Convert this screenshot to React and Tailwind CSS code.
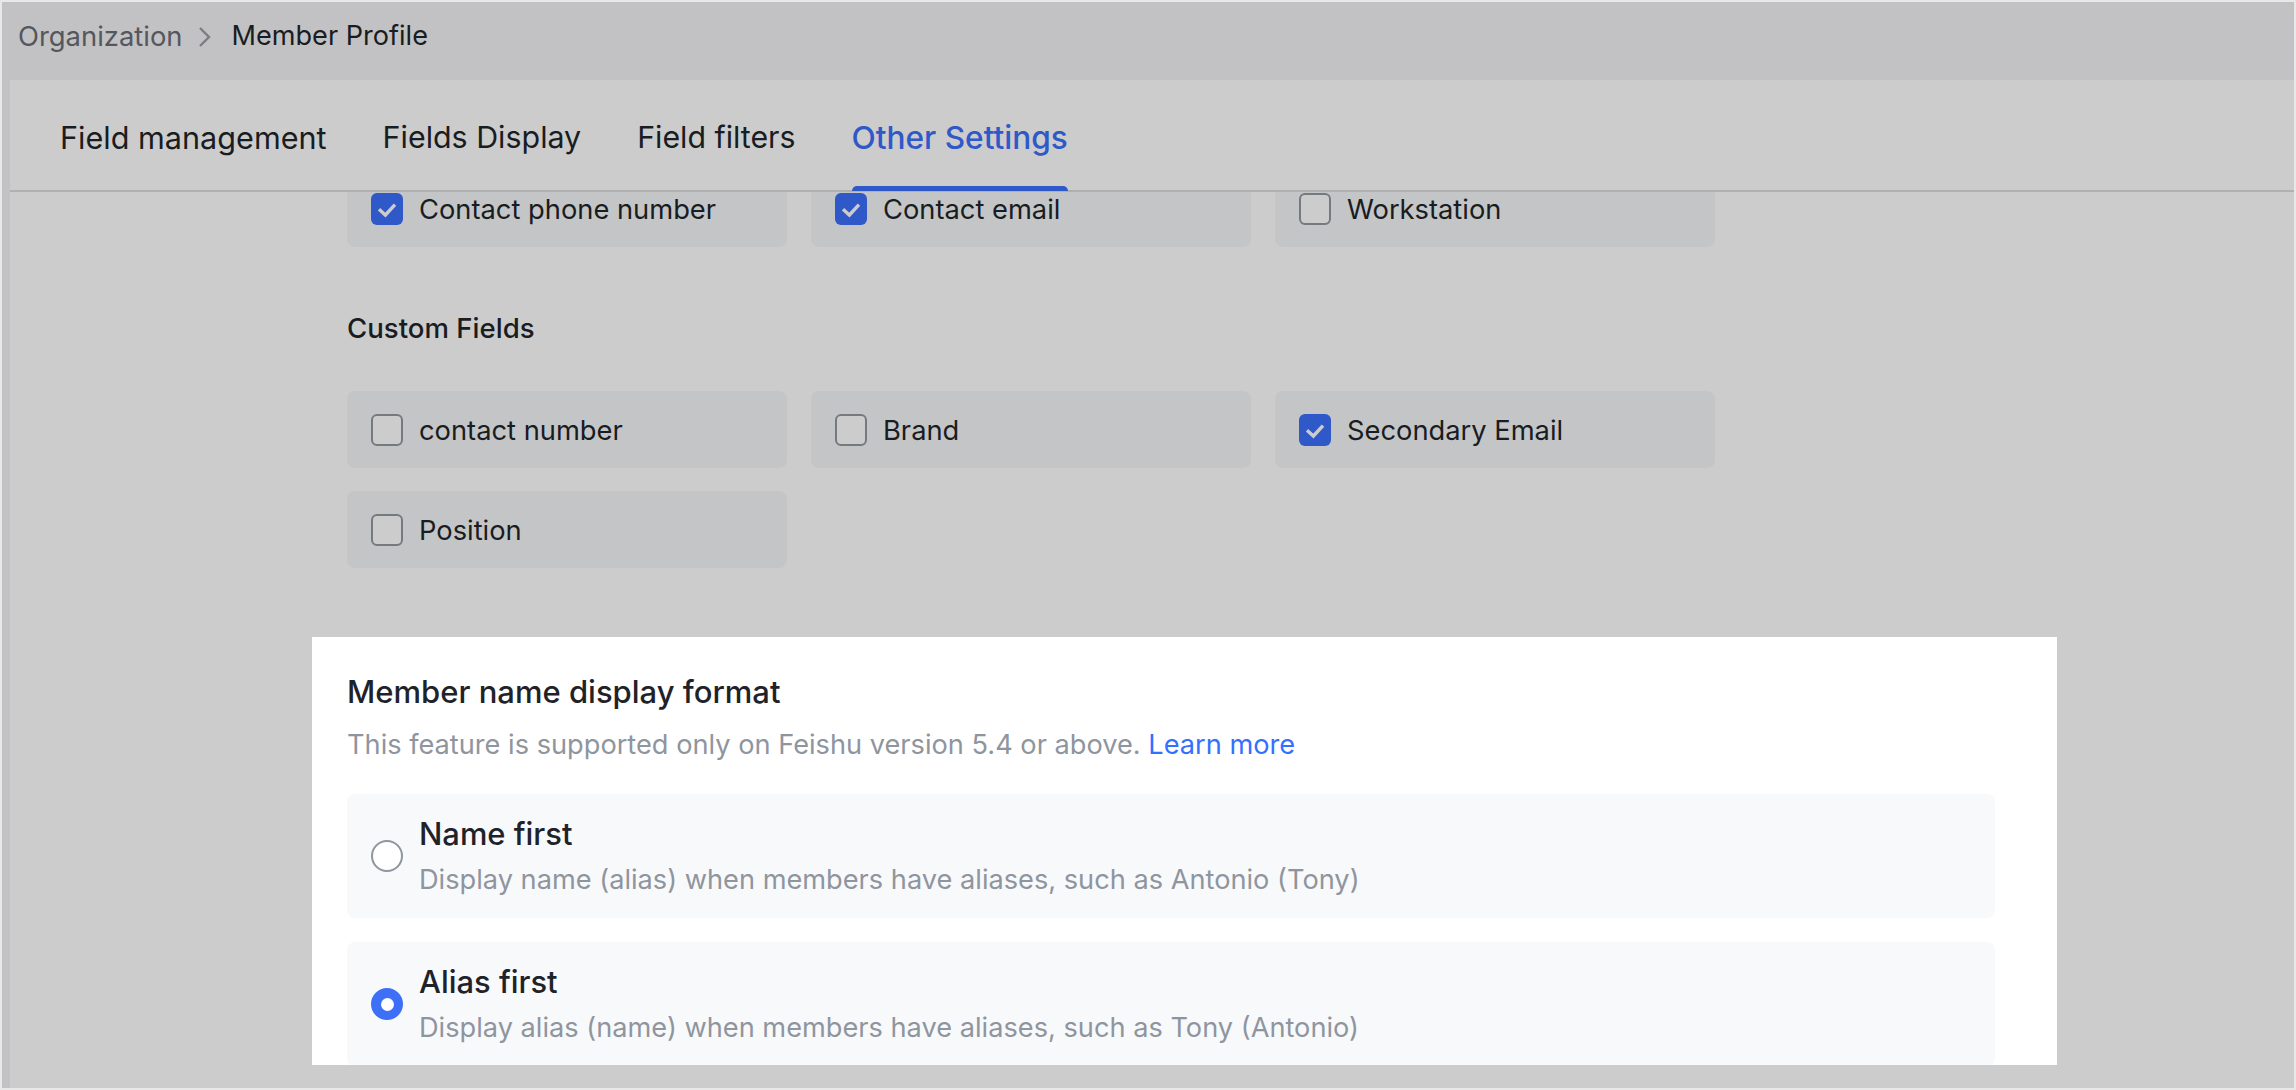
function Check() {
  return (
    <svg width="32" height="32" viewBox="0 0 32 32" fill="none">
      <path d="M8 16.3l6.4 5.7L24 11.6" stroke="#cccccc" strokeWidth="3.4" />
    </svg>
  );
}

function Field({ label, checked }) {
  return (
    <div className="flex h-[77px] items-center rounded-lg bg-[#c4c5c7] pl-6">
      {checked ? (
        <span className="flex h-8 w-8 shrink-0 items-center justify-center rounded-md bg-[#2f58c9]">
          <Check />
        </span>
      ) : (
        <span className="h-8 w-8 shrink-0 rounded-md border-2 border-[#76797e] bg-[#cccccc]" />
      )}
      <span className="ml-[16px] pt-[4px] text-[27.3px] text-[#191c21]">{label}</span>
    </div>
  );
}

function Option({ title, desc, selected }) {
  return (
    <div className="flex h-[124px] shrink-0 items-center rounded-lg bg-[#f8f9fb] pl-6">
      {selected ? (
        <span className="flex h-8 w-8 shrink-0 items-center justify-center rounded-full bg-[#3e6ff7]">
          <span className="h-[13px] w-[13px] rounded-full bg-white" />
        </span>
      ) : (
        <span className="h-8 w-8 shrink-0 rounded-full border-2 border-[#8f959e] bg-white" />
      )}
      <div className="ml-[16px]">
        <div className="text-[30.9px] leading-[42px] font-medium text-[#1f2329]">{title}</div>
        <div className="mt-[5px] text-[27.2px] leading-[40px] text-[#8f959e]">{desc}</div>
      </div>
    </div>
  );
}

export default function App() {
  return (
    <div className="h-[1090px] w-[2296px] overflow-hidden bg-[#e8e8e8] p-[2px] font-['Inter',sans-serif]">
      <div className="flex h-[1086px] flex-col bg-[#c2c2c4]">
        <div className="flex h-[78px] shrink-0 items-center pb-[9px] pl-4">
          <span className="text-[27.4px] text-[#54575d]">Organization</span>
          <svg className="mr-[20px] ml-[15px]" width="14" height="24" viewBox="0 0 14 24" fill="none">
            <path d="M2 3l9 9-9 9" stroke="#7a7d82" strokeWidth="2.4" />
          </svg>
          <span className="text-[27.1px] text-[#191c21]">Member Profile</span>
        </div>
        <div className="ml-2 flex min-h-0 flex-1 flex-col bg-[#cccccc]">
          <div className="flex h-[112px] shrink-0 items-center gap-[56px] border-b-2 border-[#b0b0b0] pt-[5px] pl-[50px] text-[30.6px]">
            <span className="text-[#191c21]">Field management</span>
            <span className="text-[30.4px] text-[#191c21]">Fields Display</span>
            <span className="text-[30.3px] text-[#191c21]">Field filters</span>
            <span className="relative -mt-[5px] flex h-[110px] items-center pt-[5px] text-[31.6px] font-medium text-[#2f58c9]">
              Other Settings
              <span className="absolute inset-x-0 bottom-[-1px] h-[5px] rounded-t-md bg-[#2f58c9]" />
            </span>
          </div>
          <div className="min-h-0 flex-1 overflow-hidden">
            <div className="-mt-[22px] pl-[337px]">
              <div className="grid w-[1368px] grid-cols-3 gap-x-6">
                <Field label="Contact phone number" checked />
                <Field label="Contact email" checked />
                <Field label="Workstation" />
              </div>
              <div className="mt-[63px] text-[27.6px] leading-[36px] font-medium text-[#191c21]">Custom Fields</div>
              <div className="mt-[45px] grid w-[1368px] grid-cols-3 gap-x-6 gap-y-[23px]">
                <Field label="contact number" />
                <Field label="Brand" />
                <Field label="Secondary Email" checked />
                <Field label="Position" />
              </div>
            </div>
            <div className="mt-[69px] ml-[302px] flex h-[428px] w-[1745px] flex-col overflow-hidden bg-white pr-[62px] pl-[35px]">
              <div className="mt-[35px] text-[31px] leading-[40px] font-medium text-[#1f2329]">Member name display format</div>
              <div className="mt-[13px] text-[27.2px] leading-[40px] text-[#8f959e]">
                This feature is supported only on Feishu version 5.4 or above. <span className="text-[#3370ff]">Learn more</span>
              </div>
              <div className="mt-[29px] flex flex-col gap-6">
                <Option title="Name first" desc="Display name (alias) when members have aliases, such as Antonio (Tony)" />
                <Option title="Alias first" desc="Display alias (name) when members have aliases, such as Tony (Antonio)" selected />
              </div>
            </div>
          </div>
        </div>
      </div>
    </div>
  );
}
